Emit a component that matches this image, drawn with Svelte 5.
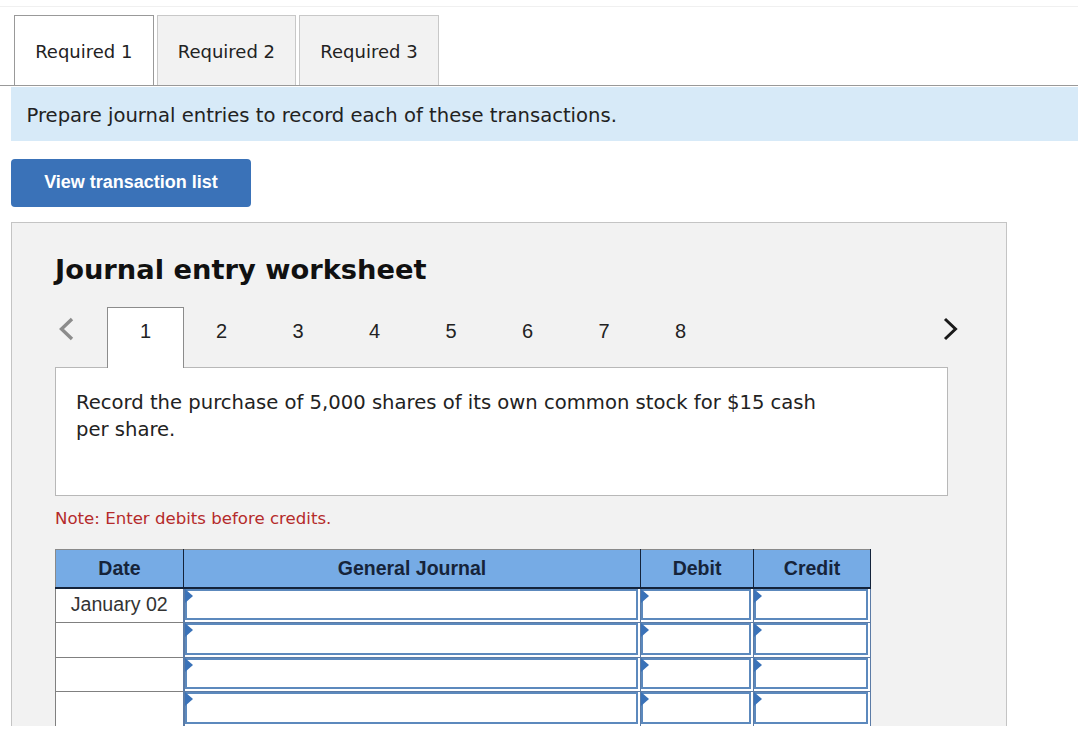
<script lang="ts">
  let activeTab = $state(0);
  let activeStep = $state(0);

  const tabs = ['Required 1', 'Required 2', 'Required 3'];
  const steps = [1, 2, 3, 4, 5, 6, 7, 8];
  const rows = ['January 02', '', '', ''];
</script>

<div class="page">
  <div class="top-rule"></div>

  <div class="tabs">
    {#each tabs as tab, i}
      <button class="tab" class:active={i === activeTab} onclick={() => (activeTab = i)}>{tab}</button>
    {/each}
  </div>

  <div class="banner">Prepare journal entries to record each of these transactions.</div>

  <button class="view-list">View transaction list</button>

  <section class="worksheet">
    <h2>Journal entry worksheet</h2>

    <div class="pager">
      <button class="arrow prev" aria-label="Previous">
        <svg width="16" height="24" viewBox="0 0 16 24"><path d="M14 2 L3.5 12 L14 22" fill="none" stroke="#8c8c8c" stroke-width="3.4" /></svg>
      </button>
      {#each steps as step, i}
        <button class="step" class:current={i === activeStep} onclick={() => (activeStep = i)}>{step}</button>
      {/each}
      <button class="arrow next" aria-label="Next">
        <svg width="16" height="24" viewBox="0 0 16 24"><path d="M2 2 L12.5 12 L2 22" fill="none" stroke="#1a1a1a" stroke-width="3" /></svg>
      </button>
    </div>

    <div class="prompt">
      <p>Record the purchase of 5,000 shares of its own common stock for $15 cash per share.</p>
    </div>

    <p class="note">Note: Enter debits before credits.</p>

    <table>
      <colgroup>
        <col class="c-date" />
        <col class="c-journal" />
        <col class="c-debit" />
        <col class="c-credit" />
      </colgroup>
      <thead>
        <tr>
          <th>Date</th>
          <th>General Journal</th>
          <th>Debit</th>
          <th>Credit</th>
        </tr>
      </thead>
      <tbody>
        {#each rows as date}
          <tr>
            <td class="date">{date}</td>
            <td class="entry"><div class="field"></div></td>
            <td class="entry"><div class="field"></div></td>
            <td class="entry"><div class="field"></div></td>
          </tr>
        {/each}
      </tbody>
    </table>
  </section>
</div>

<style>
  :global(body) {
    background: #fff;
  }

  .page {
    height: 726px;
    overflow: hidden;
    font-family: "DejaVu Sans", Verdana, sans-serif;
    color: #222;
  }

  button {
    font: inherit;
    cursor: pointer;
  }

  .top-rule {
    height: 6px;
    border-bottom: 1px solid #f0f0f0;
  }

  .tabs {
    display: flex;
    gap: 3px;
    margin-top: 8px;
    padding-left: 14px;
    border-bottom: 1px solid #999;
    height: 70px;
  }

  .tab {
    width: 139.6px;
    height: 70px;
    padding: 2px 0 0;
    font-size: 18px;
    color: #222;
    background: #f2f2f2;
    border: 1px solid #c8c8c8;
    border-bottom: none;
  }

  .tab.active {
    background: #fff;
    border-color: #999;
  }

  .banner {
    margin: 1px 0 0 11px;
    height: 54px;
    padding: 2px 0 0 15.5px;
    box-sizing: border-box;
    display: flex;
    align-items: center;
    background: #d7eaf8;
    font-size: 19.6px;
    color: #222;
  }

  .view-list {
    display: block;
    margin: 18px 0 0 11px;
    width: 240px;
    height: 48px;
    padding: 0 0 2px;
    border: none;
    border-radius: 4px;
    background: #3a72b8;
    color: #fff;
    font-family: "Liberation Sans", Arial, sans-serif;
    font-size: 18px;
    font-weight: 700;
  }

  .worksheet {
    margin: 15px 0 0 11px;
    width: 996px;
    box-sizing: border-box;
    height: 520px;
    padding: 0 58px 0 43px;
    background: #f2f2f2;
    border: 1px solid #c4c4c4;
  }

  h2 {
    margin: 30px 0 20px;
    font-size: 27.3px;
    line-height: 34px;
    font-weight: 700;
    color: #111;
  }

  .pager {
    display: flex;
    height: 61px;
    margin-right: -12px;
    font-family: "Liberation Sans", Arial, sans-serif;
  }

  .arrow {
    padding: 0;
    background: none;
    border: none;
    height: 44px;
    display: flex;
    align-items: center;
  }

  .arrow.prev {
    width: 52px;
    padding-left: 3px;
  }

  .arrow.next {
    margin-left: auto;
    padding-right: 1px;
  }

  .step {
    width: 76.5px;
    height: 61px;
    padding: 0 0 14px;
    font-size: 20px;
    color: #222;
    background: none;
    border: 1px solid transparent;
    border-bottom: none;
  }

  .step.current {
    position: relative;
    z-index: 1;
    width: 77px;
    margin-right: -0.7px;
    background: #fff;
    border-color: #8c8c8c;
  }

  .prompt {
    height: 129px;
    box-sizing: border-box;
    padding: 21px 20px 0;
    margin-top: -1px;
    background: #fff;
    border: 1px solid #b8b8b8;
  }

  .prompt p {
    margin: 0;
    max-width: 760px;
    font-size: 19.6px;
    line-height: 27px;
    color: #222;
  }

  .note {
    margin: 12px 0 20px;
    font-size: 16.6px;
    line-height: 21px;
    color: #b52b2b;
  }

  table {
    width: 815px;
    table-layout: fixed;
    border-collapse: collapse;
    font-family: "Liberation Sans", Arial, sans-serif;
    background: #fff;
  }

  .c-date { width: 128px; }
  .c-journal { width: 457px; }
  .c-debit { width: 113px; }
  .c-credit { width: 117px; }

  th {
    height: 35.5px;
    padding: 1px 0 0;
    font-size: 19.5px;
    font-weight: 700;
    color: #16243a;
    background: #76abe5;
    border: 1px solid #8a8a8a;
    border-left-color: #14233a;
    border-right-color: #14233a;
    border-bottom: 2px solid #14233a;
  }

  th:first-child {
    border-left-color: #8a8a8a;
  }

  td {
    padding: 0;
  }

  .date {
    text-align: center;
    font-size: 19.6px;
    padding-bottom: 1px;
    color: #333;
    border: 1px solid #808080;
    border-right-color: #4f74a3;
  }

  .entry {
    position: relative;
    padding: 0 2px 2px 0;
    background: #fff;
    border: 1px solid #5b7ba6;
  }

  .date + .entry {
    border-left-width: 2px;
  }

  .field {
    box-sizing: border-box;
    height: 31.5px;
    border: 2px solid #5c89bd;
  }

  .entry::before {
    content: '';
    position: absolute;
    top: 0;
    left: 0;
    border-left: 8px solid #3a72b8;
    border-top: 7px solid transparent;
    border-bottom: 7px solid transparent;
  }
</style>
